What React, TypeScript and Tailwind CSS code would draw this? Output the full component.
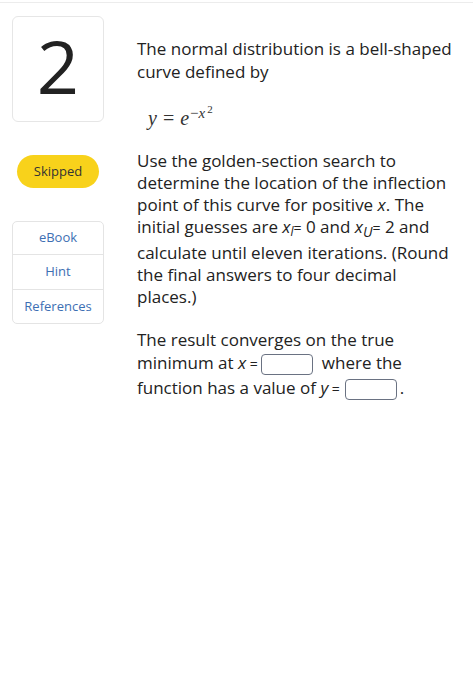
import React from "react";

const sans = { fontFamily: '"Open Sans", Arial, sans-serif' };

function AnswerBox() {
  return (
    <span className="inline-block align-middle w-[52px] h-[21px] mx-[3px] border border-gray-500 rounded-[4px] bg-white" />
  );
}

export default function App() {
  return (
    <div className="w-[473px] h-[700px] bg-white text-[#222]" style={sans}>
      <div className="h-[3px] border-b border-[#ececec]" />
      <div className="flex pl-[12px]">
        {/* left column */}
        <div className="w-[92px] flex flex-col items-center pt-[13px]">
          <div className="w-[92px] h-[106px] border border-[#e6e6e6] rounded-[6px] flex items-center justify-center">
            <span className="text-[74px] font-normal leading-none text-[#222] -mt-[7px]">2</span>
          </div>
          <div className="mt-[33px] w-[82px] h-[33px] rounded-full bg-[#f8d21b] flex items-center justify-center text-[13px] text-[#333]">
            Skipped
          </div>
          <div className="mt-[33px] w-[92px] border border-[#e4e4e4] rounded-[5px] flex flex-col text-[13px] text-[#3d6fb3]">
            <div className="h-[33px] flex items-center justify-center border-b border-[#e4e4e4]">eBook</div>
            <div className="h-[35px] flex items-center justify-center border-b border-[#e4e4e4]">Hint</div>
            <div className="h-[33px] flex items-center justify-center">References</div>
          </div>
        </div>

        {/* right column */}
        <div className="ml-[33px] w-[325px] pt-[34px] text-[17px] leading-[23px]">
          <p>
            The normal distribution is a bell-shaped
            <br />
            curve defined by
          </p>
          <p
            className="mt-[24px] ml-[11px] text-[20px] leading-[23px] italic text-[#333]"
            style={{ fontFamily: '"Liberation Serif", "Times New Roman", serif' }}
          >
            y<span className="not-italic mx-[6px]">=</span>e
            <sup className="text-[15px] relative -top-[7px] ml-[1px]">
              <span className="not-italic">−</span>x<sup className="text-[11px] not-italic ml-[2px]">2</sup>
            </sup>
          </p>
          <div className="mt-[20px] leading-[22px]">
            <p>
              Use the golden-section search to
              <br />
              determine the location of the inflection
              <br />
              point of this curve for positive <i>x</i>. The
              <br />
              initial guesses are <i>x</i>
              <sub className="italic text-[12px]">l</sub>
              <span className="text-[14px]">=</span> 0 and <i>x</i>
              <sub className="italic text-[14px]">U</sub>
              <span className="text-[14px]">=</span> 2 and
            </p>
            <p className="mt-[3px]">
              calculate until eleven iterations. (Round
              <br />
              the final answers to four decimal
              <br />
              places.)
            </p>
          </div>
          <div className="mt-[20px] leading-[23px]">
            <p>The result converges on the true</p>
            <p>
              minimum at <i>x</i>
              <span className="text-[14px]"> =</span>
              <AnswerBox />
              <span className="ml-[6px]">where the</span>
            </p>
            <p className="mt-[1px]">
              function has a value of <i>y</i>
              <span className="text-[14px]"> =</span>
              <span className="ml-[2px]" />
              <AnswerBox />.
            </p>
          </div>
        </div>
      </div>
    </div>
  );
}
